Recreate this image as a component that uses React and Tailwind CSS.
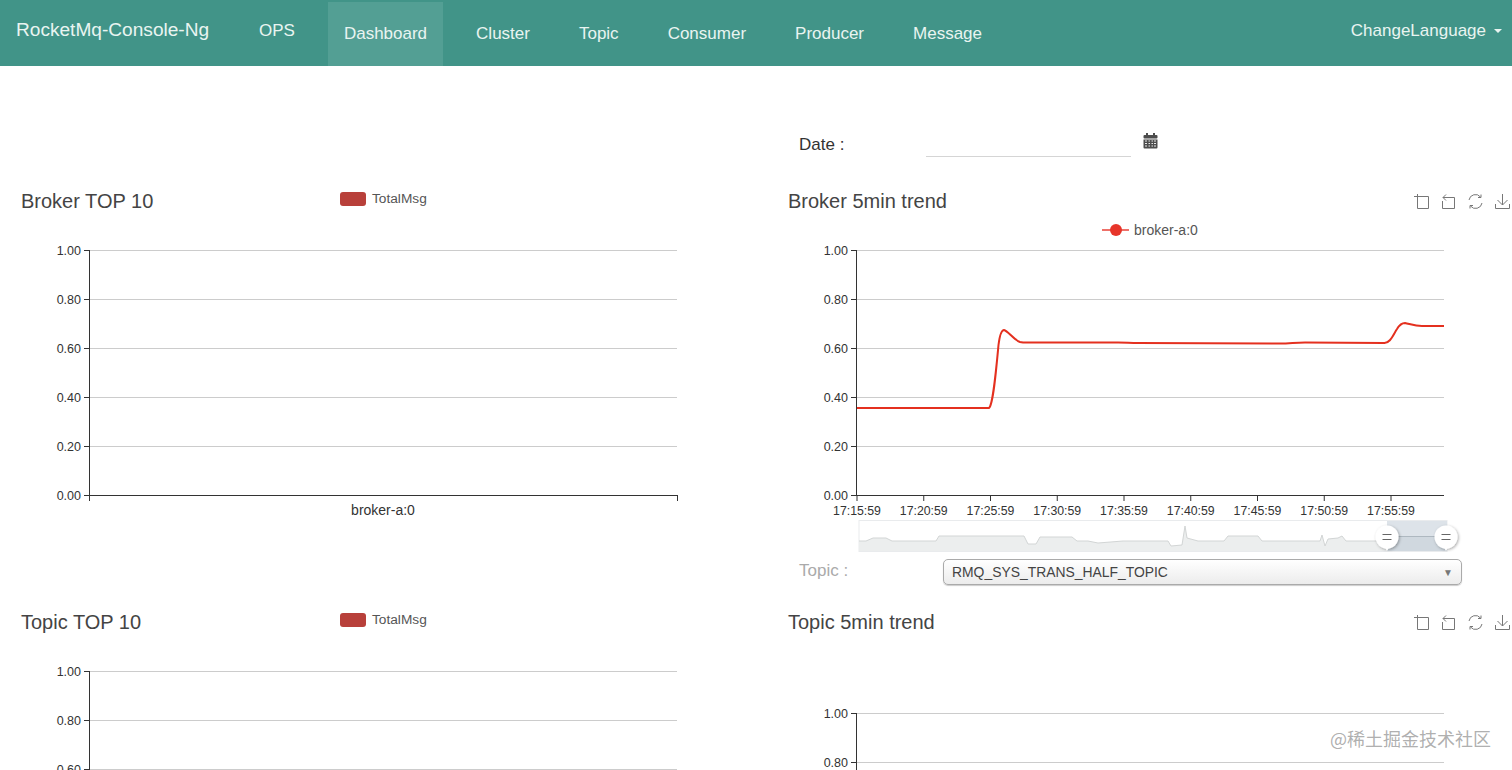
import React from "react";

const navLinks = ["Dashboard", "Cluster", "Topic", "Consumer", "Producer", "Message"];
const yLabels = ["1.00", "0.80", "0.60", "0.40", "0.20", "0.00"];
const times = ["17:15:59", "17:20:59", "17:25:59", "17:30:59", "17:35:59", "17:40:59", "17:45:59", "17:50:59", "17:55:59"];

const trendLine =
  "M857 408 L989 408 C993 405 996 372 998.5 345 C1000 333 1002 330 1004 330 C1008 331 1014 340 1020 342 C1024 343 1028 342.5 1034 342.5 L1118 342.5 C1126 342.5 1130 343 1138 343 L1280 343.5 C1290 343.5 1295 342.5 1305 342.5 L1384 343 C1390 343.5 1393 335 1397 329 C1400 324 1403 323 1405 323 C1410 324 1415 326 1422 326 L1444 326";

const miniLine =
  "M859 541 L866 541 L873 538 L886 538 L892 541 L936 541 L939 536 L1024 536 L1028 544 L1036 544 L1040 537 L1072 537 L1077 541 L1088 541 L1098 543 L1123 541 L1168 541 L1171 546 L1182 545 L1185 526 L1187 538 L1198 541 L1224 541 L1228 536 L1258 536 L1262 541 L1320 541 L1322 535 L1325 546 L1328 539 L1338 538 L1342 536 L1346 541 L1387 541";

// count = how many of the ticks fit on screen, the lower charts are cut by the window
function YAxis({ left, right, top, count = 6 }) {
  const full = count === 6;
  return (
    <g>
      {yLabels.slice(0, count).map((label, i) => {
        const y = top + i * 49 + 0.5;
        return (
          <g key={label}>
            {i < 5 && <line x1={left} x2={right} y1={y} y2={y} stroke="#cccccc" />}
            <line x1={left - 6} x2={left} y1={y} y2={y} stroke="#333" />
            <text x={left - 9} y={y + 4} textAnchor="end" fontSize="12.5" fill="#333">
              {label}
            </text>
          </g>
        );
      })}
      <line x1={left - 0.5} x2={left - 0.5} y1={top} y2={full ? top + 245 : 770} stroke="#333" />
      {full && <line x1={left} x2={right} y1={top + 245.5} y2={top + 245.5} stroke="#333" />}
    </g>
  );
}

function BrokerTop() {
  return (
    <svg viewBox="0 217 767 303" className="block w-[767px]" height="303">
      <YAxis left={90} right={677} top={250} />
      <line x1="89.5" x2="89.5" y1="495" y2="501" stroke="#333" />
      <line x1="677.5" x2="677.5" y1="495" y2="501" stroke="#333" />
      <text x="383" y="515" textAnchor="middle" fontSize="14" fill="#333">
        broker-a:0
      </text>
    </svg>
  );
}

function TopicTop() {
  return (
    <svg viewBox="0 638 767 132" className="block w-[767px]" height="132">
      <YAxis left={90} right={677} top={671} count={3} />
    </svg>
  );
}

function Handle({ x }) {
  return (
    <g>
      <circle cx={x} cy="537" r="11.5" fill="#fff" filter="url(#handleShadow)" />
      <path d={`M${x - 3} 546 L${x} 551 L${x + 3} 546 Z`} fill="#fff" />
      <line x1={x - 4.5} x2={x + 4.5} y1="534.5" y2="534.5" stroke="#666" />
      <line x1={x - 4.5} x2={x + 4.5} y1="539.5" y2="539.5" stroke="#666" />
    </g>
  );
}

function BrokerTrend() {
  return (
    <svg viewBox="767 217 745 335" className="block w-[745px]" height="335">
      <defs>
        <filter id="handleShadow" x="-40%" y="-40%" width="180%" height="180%">
          <feDropShadow dx="1" dy="1" stdDeviation="1.5" floodColor="#000" floodOpacity="0.35" />
        </filter>
      </defs>

      <line x1="1102" x2="1129" y1="230" y2="230" stroke="#e7352a" strokeOpacity="0.7" strokeWidth="2" />
      <circle cx="1116" cy="230" r="6" fill="#e7352a" />
      <text x="1134" y="234.5" fontSize="14" fill="#555">
        broker-a:0
      </text>

      <YAxis left={857} right={1444} top={250} />
      {times.map((t, i) => {
        const x = 857 + i * 66.75;
        return (
          <g key={t}>
            <line x1={x} x2={x} y1="495" y2="501" stroke="#333" />
            <text x={x} y="515" textAnchor="middle" fontSize="12.3" fill="#333">
              {t}
            </text>
          </g>
        );
      })}
      <path d={trendLine} fill="none" stroke="#e4301f" strokeWidth="2" />

      <rect x="859" y="520.5" width="588" height="31" fill="#fff" stroke="#e9ebed" />
      <path d={`${miniLine} L1387 551 L859 551 Z`} fill="#eceeee" />
      <path d={miniLine} fill="none" stroke="#d2d5d5" />
      <rect x="1387" y="521" width="60" height="30" fill="#dde3e9" />
      <rect x="1387" y="537" width="60" height="14" fill="#d0d8df" />
      <line x1="1387" x2="1447" y1="536.5" y2="536.5" stroke="#aeb8c0" />
      <Handle x={1387} />
      <Handle x={1446} />
    </svg>
  );
}

function TopicTrend() {
  return (
    <svg viewBox="767 638 745 132" className="block w-[745px]" height="132">
      <YAxis left={857} right={1444} top={713} count={2} />
    </svg>
  );
}

function ToolIcons() {
  return (
    <div className="flex gap-[12px] pr-[2px] text-[#777]">
      <svg viewBox="0 0 15 15" className="w-[15px] h-[15px]" fill="none" stroke="currentColor">
        <path d="M3.5 0V14.5H14.5V2.5H0" />
      </svg>
      <svg viewBox="0 0 15 15" className="w-[15px] h-[15px]" fill="none" stroke="currentColor">
        <path d="M1.5 7V14.5H13.5V3.5H2M5 0.5L2 3.5L5 6.5" />
      </svg>
      <svg viewBox="0 0 15 15" className="w-[15px] h-[15px]" fill="none" stroke="currentColor">
        <path d="M1 6A6.5 6.5 0 0 1 12.5 3M14 9A6.5 6.5 0 0 1 2.5 12" />
        <path d="M13 0.5V3.5H10M2 14.5V11.5H5" />
      </svg>
      <svg viewBox="0 0 15 15" className="w-[15px] h-[15px]" fill="none" stroke="currentColor">
        <path d="M7.5 0V11M2.5 6L7.5 11L12.5 6M0.5 10V14.5H14.5V10" />
      </svg>
    </div>
  );
}

function CalendarIcon() {
  return (
    <svg viewBox="0 0 15 16" className="w-[15px] h-[16px] mt-[1px] ml-[12px]" fill="#4d4d4d">
      <rect x="3" y="0" width="2" height="3" />
      <rect x="10" y="0" width="2" height="3" />
      <rect x="0.5" y="2" width="14" height="3.5" rx="1" />
      <path d="M0.5 6.5H14.5V14.5A1 1 0 0 1 13.5 15.5H1.5A1 1 0 0 1 0.5 14.5Z" />
      <path
        d="M2 8H4M5.5 8H7M8.5 8H10M11 8H13M2 10.5H4M5.5 10.5H7M8.5 10.5H10M11 10.5H13M2 13H4M5.5 13H7M8.5 13H10M11 13H13"
        stroke="#e8e8e8"
        strokeWidth="1"
      />
    </svg>
  );
}

function PanelTitle({ children }) {
  return <h3 className="text-[20px] text-[#444] leading-none">{children}</h3>;
}

function Legend() {
  return (
    <div className="flex items-center gap-[6px] -mt-[4px] text-[13.7px] text-[#555]">
      <span className="w-[26px] h-[14px] rounded-[3px] bg-[#b8403a]" />
      TotalMsg
    </div>
  );
}

export default function App() {
  return (
    <div className="relative h-screen overflow-hidden bg-white font-['Liberation_Sans',Arial,sans-serif]">
      <header className="flex h-[66px] gap-[17px] bg-[#419488] text-[#e9f4f1] text-[17px]">
        <a className="w-[226px] px-4 pb-[5px] flex items-center text-[19.1px] whitespace-nowrap">RocketMq-Console-Ng</a>
        <a className="px-4 pb-[5px] flex items-center text-[17px]">OPS</a>
        {navLinks.map((item) => (
          <a
            key={item}
            className={`px-4 mt-[2px] flex items-center ${item === "Dashboard" ? "bg-[#539f94]" : ""}`}
          >
            {item}
          </a>
        ))}
        <a className="ml-auto pr-[10px] pb-[5px] flex items-center gap-[6px]">
          <span className="mr-[2px]">ChangeLanguage</span>
          <span className="w-0 h-0 border-x-[4px] border-x-transparent border-t-[4px] border-t-[#e9f4f1]" />
        </a>
      </header>

      <main className="grid grid-cols-[767px_745px]">
        <div className="h-[119px]" />
        <div className="flex items-start pl-[32px] pt-[66px] text-[#333] text-[17px]">
          <span className="w-[127px] leading-[26px]">Date :</span>
          <div className="w-[205px] h-[25px] border-b border-[#d5d5d5]" />
          <CalendarIcon />
        </div>

        <section className="h-[421px]">
          <div className="flex items-center h-[32px] pl-[21px]">
            <div className="w-[319px]">
              <PanelTitle>Broker TOP 10</PanelTitle>
            </div>
            <Legend />
          </div>
          <BrokerTop />
        </section>

        <section className="h-[421px]">
          <div className="flex items-center justify-between h-[32px] pl-[21px]">
            <PanelTitle>Broker 5min trend</PanelTitle>
            <ToolIcons />
          </div>
          <BrokerTrend />
          <div className="flex items-center mt-[7px] pl-[32px]">
            <span className="w-[144px] -mt-[2px] text-[17px] text-[#aaa]">Topic :</span>
            <div className="flex items-center justify-between w-[519px] h-[26px] px-[8px] rounded-[5px] border border-[#aaa] bg-gradient-to-b from-white to-[#ececec] text-[13.9px] text-[#444] shadow-[0_1px_1px_#ccc]">
              RMQ_SYS_TRANS_HALF_TOPIC
              <span className="text-[10px] text-[#777]">▼</span>
            </div>
          </div>
        </section>

        <section className="h-[164px]">
          <div className="flex items-center h-[32px] pl-[21px]">
            <div className="w-[319px]">
              <PanelTitle>Topic TOP 10</PanelTitle>
            </div>
            <Legend />
          </div>
          <TopicTop />
        </section>

        <section className="h-[164px]">
          <div className="flex items-center justify-between h-[32px] pl-[21px]">
            <PanelTitle>Topic 5min trend</PanelTitle>
            <ToolIcons />
          </div>
          <TopicTrend />
        </section>
      </main>

      <div className="absolute right-[21px] bottom-[23px] text-[18px] leading-none text-[#9a9a9a]/80 font-['Noto_Sans_CJK_SC',sans-serif]">
        @稀土掘金技术社区
      </div>
    </div>
  );
}
